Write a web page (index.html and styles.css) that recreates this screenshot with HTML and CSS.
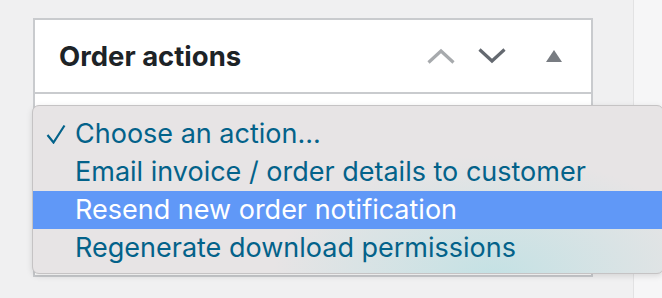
FILE: index.html
```html
<!DOCTYPE html>
<html>
<head>
<meta charset="utf-8">
<link rel="stylesheet" href="styles.css">
</head>
<body>
<div class="page">
  <div class="main">
    <div class="panel">
      <div class="panel-header">
        <h2 class="panel-title">Order actions</h2>
        <div class="panel-tools">
          <svg class="tool up" width="28" height="16" viewBox="0 0 28 16"><polyline points="1.5,14.5 14,3 26.5,14.5" fill="none" stroke="#a7aaad" stroke-width="3.2"/></svg>
          <svg class="tool down" width="28" height="16" viewBox="0 0 28 16"><polyline points="1.5,1.5 14,13 26.5,1.5" fill="none" stroke="#646970" stroke-width="3.2"/></svg>
          <svg class="tool toggle" width="16" height="12" viewBox="0 0 16 12"><polygon points="8,0 16,12 0,12" fill="#787c82"/></svg>
        </div>
      </div>
      <div class="panel-body"></div>
    </div>
    <div class="menu">
      <div class="menu-item"><svg class="check" width="20" height="20" viewBox="0 0 20 20"><polyline points="1.5,11 7.5,18.5 18.5,1.5" fill="none" stroke="#03628a" stroke-width="2.2"/></svg>Choose an action...</div>
      <div class="menu-item">Email invoice / order details to customer</div>
      <div class="menu-item active">Resend new order notification</div>
      <div class="menu-item">Regenerate download permissions</div>
    </div>
  </div>
  <div class="side"></div>
</div>
</body>
</html>
```
FILE: styles.css
```css
html, body {
  margin: 0;
  padding: 0;
  width: 662px;
  height: 298px;
  overflow: hidden;
  background: #f0f0f1;
  font-family: Inter, "Open Sans", sans-serif;
}
.page {
  display: flex;
  height: 298px;
}
.main {
  position: relative;
  width: 633px;
  padding: 18px 0 0 33px;
  box-sizing: border-box;
}
.side {
  flex: 1;
  border-left: 1px solid #e2e2e3;
  background: #f6f6f7;
}
.panel {
  width: 560px;
  background: #fff;
  border: 2px solid #c9cbce;
  box-sizing: border-box;
}
.panel-header {
  height: 74px;
  display: flex;
  align-items: center;
  justify-content: space-between;
  padding: 0 28px 0 24px;
  border-bottom: 2px solid #c9cbce;
  box-sizing: border-box;
}
.panel-title {
  margin: 0;
  font-size: 27.5px;
  font-weight: 700;
  color: #1d2327;
}
.panel-tools {
  display: flex;
  align-items: center;
  gap: 23px;
  margin-right: 1px;
}
.tool.toggle {
  margin-left: 17px;
}
.panel-body {
  height: 181px;
}
.menu {
  position: absolute;
  left: 32px;
  top: 105px;
  width: 632px;
  height: 169px;
  box-sizing: border-box;
  padding: 9px 0 7px;
  border: 1px solid #c5c3c4;
  border-radius: 7px;
  background:
    radial-gradient(ellipse 220px 120px at 460px 170px, rgba(190,225,228,0.85), rgba(190,225,228,0) 100%),
    #e7e4e5;
  box-shadow: 0 2px 6px rgba(0,0,0,0.12);
  overflow: hidden;
}
.menu-item {
  position: relative;
  height: 38px;
  line-height: 38px;
  padding-left: 42px;
  font-size: 27px;
  color: #03628a;
  white-space: nowrap;
}
.menu-item.active {
  background: #6098f7;
  color: #fff;
}
.check {
  position: absolute;
  left: 13px;
  top: 9px;
}
```
